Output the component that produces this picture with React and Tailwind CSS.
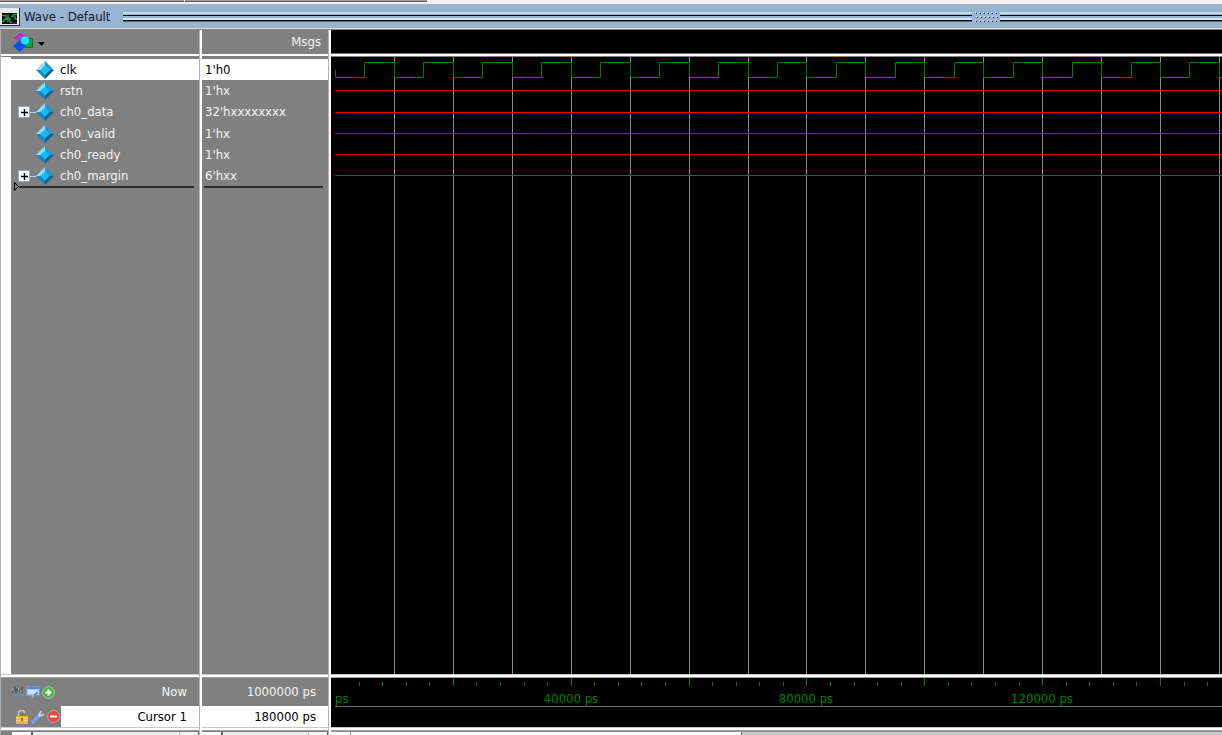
import React, { useEffect, useState } from 'react';

const signals = [
  { name: 'clk', value: "1'h0" },
  { name: 'rstn', value: "1'hx" },
  { name: 'ch0_data', value: "32'hxxxxxxxx", bus: true },
  { name: 'ch0_valid', value: "1'hx" },
  { name: 'ch0_ready', value: "1'hx" },
  { name: 'ch0_margin', value: "6'hxx", bus: true },
];

// Wave geometry: origin is 4px into the pane, one grid cell is 10000 ps
const ORIGIN = 4;
const PANES_WIDTH = 335;
const PX_PER_CELL = 58.93;
const CELLS = 60;
const xAt = (cells) => Math.round(ORIGIN + cells * PX_PER_CELL);

const cellIndexes = Array.from({ length: CELLS }, (_, i) => i);
const tickIndexes = Array.from({ length: CELLS * 2 }, (_, i) => i + 1);

const clkPath = cellIndexes.reduce(
  (d, i) => `${d} H${xAt(i + 0.5) + 0.5} V5.5 H${xAt(i + 1) + 0.5} V20.5`,
  `M${ORIGIN + 0.5} 13 V20.5`
);

const Diamond = () => (
  <svg className="h-[18px] w-[18px] shrink-0" viewBox="0 0 18 18" aria-hidden="true">
    <path d="M9 0 0 9 4.5 9 9 4.5z" fill="#8ee0f6" />
    <path d="M9 0 18 9 13.5 9 9 4.5z" fill="#1c9ad6" />
    <path d="M0 9 9 18 9 13.5 4.5 9z" fill="#1488c8" />
    <path d="M18 9 9 18 9 13.5 13.5 9z" fill="#07638d" />
    <path d="M9 4.5 13.5 9 9 13.5 4.5 9z" fill="#12bdf6" />
  </svg>
);

const WaveIcon = () => (
  <svg className="h-[18px] w-5 shrink-0" viewBox="0 0 20 18" aria-hidden="true">
    <path d="M0 0h20v18H0z" fill="#e8e8e8" />
    <path d="M19 0h1v18H0v-1h19z" fill="#303030" />
    <path d="M2 5h15v11H2z" fill="#000" />
    <path d="M2 7.5h4v3h4M8 6v4M11 8.500h2v-2h4M2 13.500h2v-2h4v3M10 10v4.500h2M15 8v3h2" fill="none" stroke="#12a050" strokeWidth="1.4" />
    <path d="M12 14h5v2h-5z" fill="#2a1a90" />
  </svg>
);

const ShapesIcon = () => (
  <svg className="h-5 w-[21px]" viewBox="0 0 21 20" aria-hidden="true">
    <path d="M.5 6.500 7.500.5 11.500 4 9 7 4 8z" fill="#c41ee0" />
    <path d="M4 6.500 7.500 3.500 9.500 5 7 8z" fill="#8a5aa0" />
    <path d="M13 6.500h6.500v9H11z" fill="#14a040" stroke="#0c7030" />
    <path d="M6.500 8 13 14 6.500 20 0 14z" fill="#0a50e8" />
    <circle cx="12" cy="8.500" r="4" fill="#14e8fa" />
  </svg>
);

const RulerIcon = () => (
  <svg className="h-3 w-[13px]" viewBox="0 0 13 12" aria-hidden="true">
    <path d="M1 7 4 1l1 6 2-6 2 4 2-3v5" fill="none" stroke="#555" strokeWidth="1.4" />
    <path d="M2 2v3M7 1l1 3M10 4v2" stroke="#b8b8b8" />
    <path d="M1 9.5h11M3 8 1 9.500 3 11M10 8l2 1.500-2 1.500" fill="none" stroke="#4a90dc" />
  </svg>
);

const NoteIcon = () => (
  <svg className="h-[14px] w-[14px]" viewBox="0 0 14 14" aria-hidden="true">
    <path d="M.5 1.500h13v9H9l-3 3v-3H.5z" fill="#a9c8f0" stroke="#6e9ad8" />
    <path d="M1 2h12v2H1z" fill="#4f86d8" />
    <path d="M2 6h9M2 8h7" stroke="#f4f8ff" />
    <path d="M7 10l4-3 1 1-3 3z" fill="#6a7a98" />
  </svg>
);

const RoundIcon = ({ color, plus }) => (
  <svg className="h-[13px] w-[13px]" viewBox="0 0 13 13" aria-hidden="true">
    <circle cx="6.5" cy="6.5" r="6" fill={color} stroke="#fff" strokeOpacity=".35" />
    <path d={plus ? 'M3.500 6.500h6M6.500 3.500v6' : 'M3 6.500h7'} stroke="#fff" strokeWidth="2" />
  </svg>
);

const LockIcon = () => (
  <svg className="h-[14px] w-[14px]" viewBox="0 0 14 14" aria-hidden="true">
    <path d="M3.500 6V4a3 3 0 0 1 6-1" fill="none" stroke="#c9c2b0" strokeWidth="1.6" />
    <path d="M1 6h12v8H1z" fill="#f0b23c" />
    <path d="M1 8h12M1 10.500h12" stroke="#fbd987" />
    <path d="M6 8h2v3H6z" fill="#9a6a18" />
  </svg>
);

const WrenchIcon = () => (
  <svg className="h-[14px] w-[14px]" viewBox="0 0 14 14" aria-hidden="true">
    <path d="M2 12 8 6" stroke="#6f9fe6" strokeWidth="3.6" strokeLinecap="round" />
    <path d="M7.500 6.500 10 4M10 1 8.500 4l1.500 1.500L13 4.500" fill="none" stroke="#c4d2e6" strokeWidth="1.8" />
  </svg>
);

const BandLine = () => (
  <div className="h-[3px] shrink-0 border-b border-[#808080] bg-white" />
);

const FootLine = () => (
  <div className="h-1 shrink-0 border-y border-t-[#c8c8c8] border-b-[#a0a0a0] bg-white" />
);

const TitleLines = ({ className }) => (
  <div className={`flex flex-col ${className}`}>
    <div className="h-[2px] bg-[#b9dcf0]" />
    <div className="mt-px h-px bg-black" />
    <div className="h-px bg-[#99b4d1]" />
    <div className="mt-px h-[2px] bg-[#c4e6f6]" />
    <div className="h-px bg-black" />
    <div className="h-px bg-[#56687c]" />
  </div>
);

const Scroller = ({ offset }) => (
  <div className="flex h-1 shrink-0 border-t border-[#808080] bg-[#eeeeee]">
    {offset && <div className="w-[11px] bg-[#808080]" />}
    <button type="button" aria-label="Scroll left" className="w-[21px] border-r-2 border-[#606060] bg-white" />
    <div className="flex-1" />
    <button type="button" aria-label="Scroll right" className="w-5 border-x border-l-[#c0c0c0] border-r-[#606060] bg-[#f6f6f6]" />
  </div>
);

const TitleBar = () => (
  <header className="flex h-[23px] shrink-0 items-center bg-[#99b4d1]">
    <WaveIcon />
    <h1 className="ml-1 w-[99px] whitespace-nowrap text-[#14142c]">Wave - Default</h1>
    <TitleLines className="flex-1" />
    <svg className="h-3 w-7" viewBox="0 0 28 12" aria-hidden="true">
      {[0, 1, 2, 3, 4, 5].map((i) => (
        <g key={i} fill="#2c3644">
          <path d={`M${4 + i * 4} 2h1v1h-1zM${5 + i * 4} 6h1v1h-1zM${4 + i * 4} 10h1v1h-1z`} />
          <path d={`M${3 + i * 4} 1h1v1h-1zM${4 + i * 4} 5h1v1h-1zM${3 + i * 4} 9h1v1h-1z`} fill="#e6f2fa" />
        </g>
      ))}
    </svg>
    <TitleLines className="w-[222px]" />
  </header>
);

const NamePane = ({ selected, onSelect }) => (
  <section className="flex w-[200px] shrink-0 flex-col border-x border-l-[#b0b0b0] border-r-[#b4b4b4] bg-[#808080]">
    <div className="flex h-6 shrink-0 items-center pl-3">
      <button type="button" aria-label="Signal options" className="flex items-center gap-1">
        <ShapesIcon />
        <svg className="mt-1 h-1 w-[7px]" viewBox="0 0 7 4" aria-hidden="true">
          <path d="M0 0h7L3.500 4z" fill="#000" />
        </svg>
      </button>
    </div>
    <BandLine />
    <div className="flex min-h-0 flex-1">
      <div className="w-[10px] shrink-0 bg-white" />
      <div className="flex-1 pt-[2px]">
        <ul className="flex h-32 flex-col">
          {signals.map((s) => (
            <li
              key={s.name}
              className={`flex flex-1 items-center pl-[7px] ${selected === s.name ? 'bg-white text-black' : ''}`}
            >
              {s.bus ? (
                <>
                  <button
                    type="button"
                    aria-label={`Expand ${s.name}`}
                    className="flex h-3 w-3 items-center justify-center border border-[#9aa4b8] bg-white"
                  >
                    <svg className="h-[7px] w-[7px]" viewBox="0 0 7 7" aria-hidden="true">
                      <path d="M0 3.500h7M3.500 0v7" stroke="#000" strokeWidth="1.400" />
                    </svg>
                  </button>
                  <span className="h-px w-[6px] bg-[#d0d0d0]" />
                </>
              ) : (
                <span className="w-[18px]" />
              )}
              <Diamond />
              <button type="button" onClick={() => onSelect(s.name)} className="ml-[6px]">
                {s.name}
              </button>
            </li>
          ))}
        </ul>
        {/* Insertion pointer */}
        <div className="-mt-[5px] flex items-center pr-[5px] pl-[3px]">
          <svg className="h-[9px] w-[5px]" viewBox="0 0 5 9" aria-hidden="true">
            <path d="M.5.5 4.500 4.500.5 8.500z" fill="#808080" stroke="#000" />
          </svg>
          <div className="h-[2px] flex-1 bg-[#2c2c2c]" />
        </div>
      </div>
    </div>
    <FootLine />
    <div className="flex h-7 shrink-0 items-center pr-3 pl-[10px]">
      <button type="button" aria-label="Grid and timeline"><RulerIcon /></button>
      <button type="button" aria-label="Edit note" className="ml-[2px]"><NoteIcon /></button>
      <button type="button" aria-label="Add cursor" className="ml-[2px]"><RoundIcon color="#4fb848" plus /></button>
      <span className="ml-auto">Now</span>
    </div>
    <div className="flex h-[21px] shrink-0 items-center">
      <button type="button" aria-label="Lock cursor" className="ml-[14px]"><LockIcon /></button>
      <button type="button" aria-label="Cursor properties" className="ml-[2px]"><WrenchIcon /></button>
      <button type="button" aria-label="Remove cursor" className="ml-[2px]"><RoundIcon color="#e8483c" /></button>
      <span className="ml-px flex flex-1 items-center justify-end self-stretch bg-white pr-3 text-black">
        Cursor 1
      </span>
    </div>
    <FootLine />
    <Scroller offset />
  </section>
);

const ValuePane = ({ selected }) => (
  <section className="ml-[2px] flex w-[127px] shrink-0 flex-col border-r border-[#b4b4b4] bg-[#808080]">
    <div className="flex h-6 shrink-0 items-center justify-end pr-[7px]">Msgs</div>
    <BandLine />
    <div className="min-h-0 flex-1 pt-[2px]">
      <ul className="flex h-32 flex-col">
        {signals.map((s) => (
          <li
            key={s.name}
            className={`flex flex-1 items-center pl-[3px] ${selected === s.name ? 'bg-white text-black' : ''}`}
          >
            {s.value}
          </li>
        ))}
      </ul>
      <div className="-mt-px mr-[5px] ml-[2px] h-[2px] bg-[#2c2c2c]" />
    </div>
    <FootLine />
    <div className="flex h-7 shrink-0 items-center justify-end pr-3">1000000 ps</div>
    <div className="flex h-[21px] shrink-0 items-center justify-end bg-white pr-3 text-black">180000 ps</div>
    <FootLine />
    <Scroller />
  </section>
);

const WavePane = () => {
  const [width, setWidth] = useState(window.innerWidth - PANES_WIDTH);

  useEffect(() => {
    const onResize = () => setWidth(window.innerWidth - PANES_WIDTH);
    window.addEventListener('resize', onResize);
    return () => window.removeEventListener('resize', onResize);
  }, []);

  // Only label the times whose text fits in the pane
  const labels = cellIndexes.filter((i) => i > 0 && i % 4 === 0 && xAt(i) + 40 < width);

  return (
    <section className="ml-[2px] flex min-w-0 flex-1 flex-col bg-black">
      <div className="h-6 shrink-0 border-b border-[#707070]" />
      <BandLine />
      <div className="min-h-0 flex-1 overflow-hidden">
        <svg className="block h-full w-full" aria-label="Waveforms">
          {cellIndexes.slice(1).map((i) => (
            <rect key={i} x={xAt(i)} y="0" width="1" height="100%" fill="#8c8c8c" />
          ))}
          <path d={clkPath} fill="none" stroke="#008000" />
          {[33, 55, 76, 97, 118].map((y) => (
            <rect key={y} x={ORIGIN} y={y} width="100%" height="1" fill="#f00000" />
          ))}
        </svg>
      </div>
      <FootLine />
      <div className="h-[49px] shrink-0 overflow-hidden pl-1">
        <svg className="block h-full w-full" aria-label="Timeline">
          {tickIndexes.map((i) => {
            const major = i % 5 === 0;
            return (
              <rect
                key={i}
                x={xAt(i * 0.4) - ORIGIN}
                y={major ? 0 : 4}
                width="1"
                height={major ? 8 : 4}
                fill="#008000"
              />
            );
          })}
          <text x="0" y="25" fill="#008000">ps</text>
          {labels.map((i) => (
            <text key={i} x={xAt(i) - ORIGIN} y="25" textAnchor="middle" fill="#008000">
              {`${i * 10000} ps`}
            </text>
          ))}
          <rect x="0" y="28" width="100%" height="1" fill="#707070" />
        </svg>
      </div>
      <FootLine />
      <div className="flex h-1 shrink-0 border-t border-[#909090] bg-[#c8c8c8]">
        <button type="button" aria-label="Scroll waves left" className="w-5 border-r border-[#909090] bg-white" />
        <div className="w-[391px] border-r border-[#707070] bg-white" />
      </div>
    </section>
  );
};

const App = () => {
  const [selected, setSelected] = useState('clk');

  return (
    <main className="flex h-screen min-h-[400px] flex-col overflow-hidden bg-white font-['DejaVu_Sans_Condensed','Noto_Sans',sans-serif] text-[13px] leading-4 text-[#f4f4f4]">
      {/* Bottom edge of the toolbar above */}
      <div className="flex h-[2px] shrink-0 bg-[#f0f0f0]">
        <div className="w-[184px] border-b border-[#606060] bg-[#a0a0a0]" />
        <div className="ml-px w-[242px] border-b border-[#606060] bg-[#a0a0a0]" />
      </div>
      <div className="h-[3px] shrink-0 border-b border-[#b0b0b0] bg-[#f0f0f0]" />
      <TitleBar />
      <div className="h-[2px] shrink-0 border-b border-[#808080] bg-[#e0e0e0]" />
      <div className="flex min-h-0 flex-1">
        <NamePane selected={selected} onSelect={setSelected} />
        <ValuePane selected={selected} />
        <WavePane />
      </div>
    </main>
  );
};

export default App;
